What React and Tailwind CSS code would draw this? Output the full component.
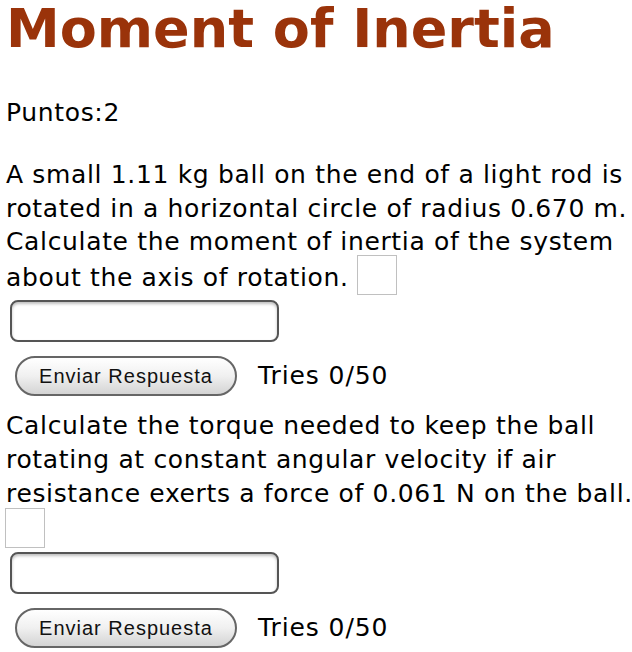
const body = { fontFamily: '"DejaVu Sans", Verdana, sans-serif' }
const btn = { fontFamily: '"Liberation Sans", Arial, sans-serif' }

function AnswerRow() {
    return (
        <>
            <div className="pl-[10px] pt-1">
                <div className="w-[269px] h-[42px] rounded-[8px] border-2 border-[#555] bg-white shadow-[inset_0_2px_3px_rgba(0,0,0,0.25)]" />
            </div>
            <div className="flex items-center pl-[15px] mt-[14px]">
                <button
                    style={btn}
                    className="w-[222px] h-[40px] rounded-full border-2 border-[#666] bg-gradient-to-b from-white via-[#f0f0f0] to-[#d4d4d4] text-[20px] tracking-[1px] text-[#111]"
                >
                    Enviar Respuesta
                </button>
                <span className="ml-[21px] text-[25px] tracking-[0.9px] text-black">Tries 0/50</span>
            </div>
        </>
    )
}

export default function App() {
    return (
        <div style={body} className="w-[632px] h-[652px] bg-white overflow-hidden text-black">
            <h1 className="pl-[6px] -mt-[2px] text-[54px] leading-[62px] font-bold text-[#9a330a]">
                Moment of Inertia
            </h1>
            <p className="pl-[6px] mt-[36px] text-[25px] leading-[34px] tracking-[0.65px]">Puntos:2</p>
            <p className="pl-[6px] w-[640px] -mb-[3px] mt-[28px] text-[25px] leading-[33.7px] tracking-[0.65px]">
                A small 1.11 kg ball on the end of a light rod is rotated in a horizontal circle of radius 0.670 m. Calculate the moment of inertia of the system about the axis of rotation.{' '}
                <span className="relative -top-[4px] inline-block w-[40px] h-[40px] border border-[#c0c0c0] align-middle" />
            </p>
            <AnswerRow />
            <p className="pl-[6px] w-[640px] -mb-[3px] mt-[13px] text-[25px] leading-[34px] tracking-[0.65px]">
                Calculate the torque needed to keep the ball rotating at constant angular velocity if air resistance exerts a force of 0.061 N on the ball.
            </p>
            <div className="pl-[5px]">
                <div className="w-[40px] h-[40px] border border-[#c0c0c0]" />
            </div>
            <AnswerRow />
        </div>
    )
}
